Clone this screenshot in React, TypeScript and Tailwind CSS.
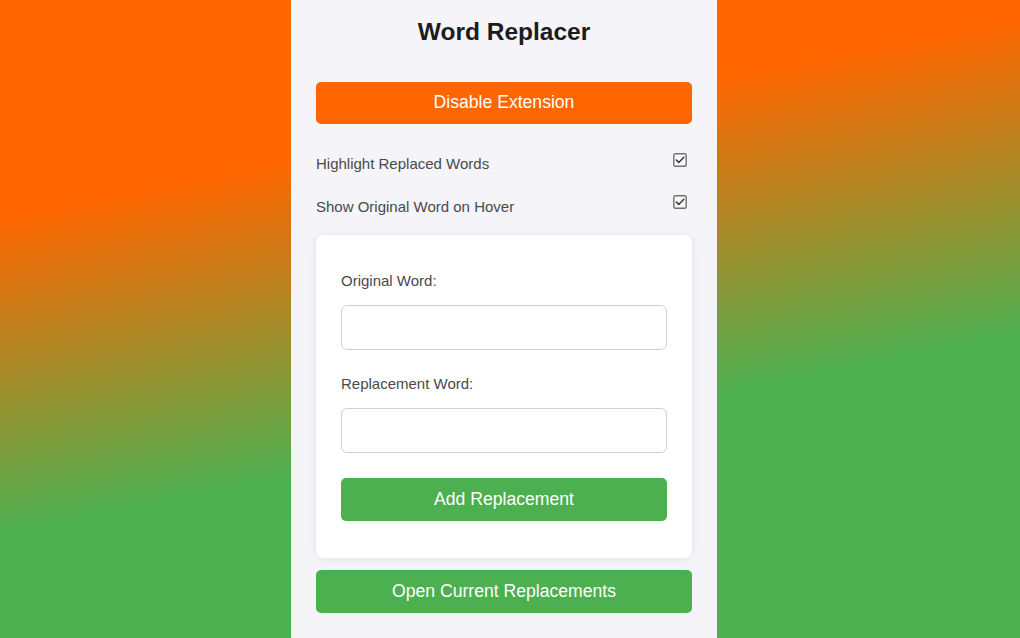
import React from "react";

function CheckBox() {
  return (
    <svg width="14" height="14" viewBox="0 0 14 14" className="block">
      <rect x="0.8" y="0.8" width="12.4" height="12.4" rx="1.5" fill="#f7f7f7" stroke="#707070" strokeWidth="1.4" />
      <path d="M3.3 7 L5.8 9.4 L10.8 4.2" fill="none" stroke="#3a3a3a" strokeWidth="1.5" strokeLinecap="round" strokeLinejoin="round" />
    </svg>
  );
}

export default function App() {
  return (
    <div
      className="w-[1020px] h-[638px] overflow-hidden bg-[linear-gradient(169deg,#ff6600_26%,#4caf50_64%)] pl-[291px]"
      style={{ fontFamily: '"Liberation Sans", Arial, sans-serif' }}
    >
      <div className="w-[426px] h-full bg-[#f4f4f9] px-[25px] pt-[17px] flex flex-col">
        <h1 className="text-[24.5px] leading-[30px] font-bold text-[#1c1c1c] text-center">Word Replacer</h1>

        <button className="mt-[35px] h-[42px] w-full rounded-[5px] bg-[#ff6600] text-white text-[17.6px] leading-none">
          Disable Extension
        </button>

        <div className="mt-[29.5px] flex items-start justify-between">
          <span className="text-[15px] leading-[20px] text-[#4a4a4a]">Highlight Replaced Words</span>
          <span className="mr-[5px] mt-[-1px]"><CheckBox /></span>
        </div>
        <div className="mt-[23.5px] flex items-start justify-between">
          <span className="text-[15px] leading-[20px] text-[#4a4a4a]">Show Original Word on Hover</span>
          <span className="mr-[5px] mt-[-2px]"><CheckBox /></span>
        </div>

        <div className="mt-[18px] bg-white rounded-[8px] shadow-[0_1px_8px_rgba(0,0,0,0.08)] px-[25px] pt-[35.5px] pb-[37px] flex flex-col">
          <label className="text-[15px] leading-[20px] text-[#4a4a4a]">Original Word:</label>
          <input className="mt-[14.5px] h-[45px] w-full rounded-[6px] border border-[#d0d0d0] bg-white outline-none" />
          <label className="mt-[23.5px] text-[15px] leading-[20px] text-[#4a4a4a]">Replacement Word:</label>
          <input className="mt-[14.5px] h-[45px] w-full rounded-[6px] border border-[#d0d0d0] bg-white outline-none" />
          <button className="mt-[25px] h-[43px] w-full rounded-[5px] bg-[#4caf50] text-white text-[17.6px] leading-none">
            Add Replacement
          </button>
        </div>

        <button className="mt-[12px] h-[43px] w-full rounded-[5px] bg-[#4caf50] text-white text-[17.6px] leading-none">
          Open Current Replacements
        </button>
      </div>
    </div>
  );
}
